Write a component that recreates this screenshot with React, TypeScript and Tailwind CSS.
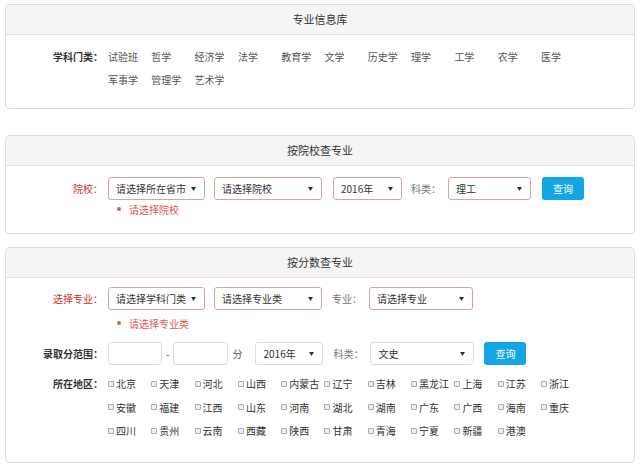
import React from "react";

const subjects = [
  "试验班", "哲学", "经济学", "法学", "教育学", "文学", "历史学", "理学", "工学", "农学", "医学",
  "军事学", "管理学", "艺术学",
];

const regions = [
  "北京", "天津", "河北", "山西", "内蒙古", "辽宁", "吉林", "黑龙江", "上海", "江苏", "浙江",
  "安徽", "福建", "江西", "山东", "河南", "湖北", "湖南", "广东", "广西", "海南", "重庆",
  "四川", "贵州", "云南", "西藏", "陕西", "甘肃", "青海", "宁夏", "新疆", "港澳",
];

function Panel({ title, className = "", children }: { title: string; className?: string; children: React.ReactNode }) {
  return (
    <div className={`mx-[5px] border border-[#dddddd] rounded-[4px] bg-white ${className}`}>
      <div className="h-[30px] flex items-center justify-center bg-[#f5f5f5] border-b border-[#e3e3e3] rounded-t-[4px] text-[11px] text-[#333]">
        {title}
      </div>
      {children}
    </div>
  );
}

function Select({ text, w, plain = false }: { text: string; w: string; plain?: boolean }) {
  return (
    <div
      className={`${w} h-[23px] shrink-0 flex items-center justify-between pl-[7px] pr-[8px] border rounded-[3px] bg-white text-[10px] text-[#333] ${
        plain ? "border-[#dddddd]" : "border-[#d7a3a3]"
      }`}
    >
      <span>{text}</span>
      <svg width="5" height="4" viewBox="0 0 5 4">
        <path d="M0 0 L5 0 L2.5 4 Z" fill="#333" />
      </svg>
    </div>
  );
}

function Btn() {
  return (
    <div className="w-[42px] h-[23px] shrink-0 flex items-center justify-center rounded-[3px] bg-[#14a5e4] text-white text-[10px]">
      查询
    </div>
  );
}

function ErrorTip({ text }: { text: string }) {
  return (
    <div className="flex items-center h-[16px] ml-[108px] pl-[3px] text-[10px] text-[#e05a55]">
      <span className="w-[4px] h-[4px] rounded-full bg-[#e05a55] mr-[8px]" />
      {text}
    </div>
  );
}

export default function App() {
  return (
    <div
      className="w-[640px] h-[466px] bg-white pt-[4px] overflow-hidden"
      style={{ fontFamily: '"Noto Sans CJK SC", "Noto Sans", sans-serif' }}
    >
      {/* 专业信息库 */}
      <Panel title="专业信息库">
        <div className="flex pt-[10px] pb-[17px]">
          <div className="w-[97px] text-right text-[10px] font-bold text-[#333] leading-[23px]">学科门类：</div>
          <div className="ml-[5px] grid grid-cols-[repeat(11,43.3px)] text-[10px] text-[#555] leading-[23px]">
            {subjects.map((s) => (
              <span key={s}>{s}</span>
            ))}
          </div>
        </div>
      </Panel>

      {/* 按院校查专业 */}
      <Panel title="按院校查专业" className="mt-[26px]">
        <div className="pt-[11px] pb-[16px]">
          <div className="flex items-center">
            <div className="w-[97px] text-right text-[10px] text-[#d2322d]">院校：</div>
            <div className="ml-[5px] flex items-center">
              <Select text="请选择所在省市" w="w-[97px]" />
              <div className="ml-[9px]"><Select text="请选择院校" w="w-[108px]" /></div>
              <div className="ml-[11px]"><Select text="2016年" w="w-[69px]" /></div>
              <span className="ml-[9px] w-[30px] text-[10px] text-[#777]">科类：</span>
              <div className="ml-[7px]"><Select text="理工" w="w-[83px]" /></div>
              <div className="ml-[11px]"><Btn /></div>
            </div>
          </div>
          <div className="mt-[1px]">
            <ErrorTip text="请选择院校" />
          </div>
        </div>
      </Panel>

      {/* 按分数查专业 */}
      <Panel title="按分数查专业" className="mt-[13px]">
        <div className="pt-[9px] pb-[19px]">
          <div className="flex items-center">
            <div className="w-[97px] text-right text-[10px] text-[#d2322d]">选择专业：</div>
            <div className="ml-[5px] flex items-center">
              <Select text="请选择学科门类" w="w-[97px]" />
              <div className="ml-[9px]"><Select text="请选择专业类" w="w-[108px]" /></div>
              <span className="ml-[10px] w-[30px] text-[10px] text-[#777]">专业：</span>
              <div className="ml-[7px]"><Select text="请选择专业" w="w-[104px]" /></div>
            </div>
          </div>
          <div className="mt-[5px]">
            <ErrorTip text="请选择专业类" />
          </div>

          <div className="flex items-center mt-[11px]">
            <div className="w-[97px] text-right text-[10px] font-bold text-[#333]">录取分范围：</div>
            <div className="ml-[5px] flex items-center text-[10px] text-[#555]">
              <div className="w-[54px] h-[23px] border border-[#dddddd] rounded-[3px]" />
              <span className="mx-[4px]">-</span>
              <div className="w-[55px] h-[23px] border border-[#dddddd] rounded-[3px]" />
              <span className="ml-[4px] w-[13px]">分</span>
              <div className="ml-[10px]"><Select text="2016年" w="w-[68px]" plain /></div>
              <span className="ml-[10px] w-[30px] text-[#777]">科类：</span>
              <div className="ml-[7px]"><Select text="文史" w="w-[104px]" plain /></div>
              <div className="ml-[10px]"><Btn /></div>
            </div>
          </div>

          <div className="flex mt-[7px]">
            <div className="w-[97px] text-right text-[10px] font-bold text-[#333] leading-[23.5px]">所在地区：</div>
            <div className="ml-[5px] grid grid-cols-[repeat(11,43.3px)] text-[10px] text-[#333] leading-[23.5px]">
              {regions.map((r) => (
                <label key={r} className="flex items-center whitespace-nowrap">
                  <span className="w-[6px] h-[6px] mr-[2px] border border-[#aaa] bg-[#f0f0f0] rounded-[1px] shrink-0" />
                  {r}
                </label>
              ))}
            </div>
          </div>
        </div>
      </Panel>
    </div>
  );
}
